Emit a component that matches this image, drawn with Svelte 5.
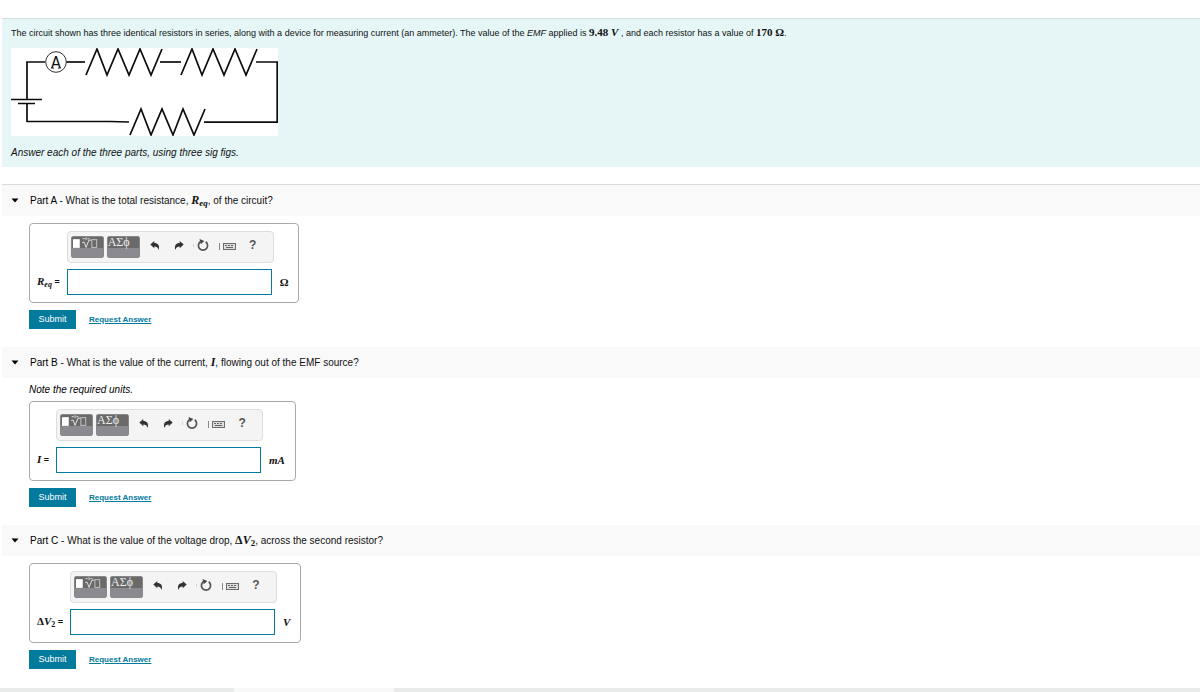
<script lang="ts">
	type Part = {
		id: string;
		before: string;
		symbol: string;
		sub?: string;
		subItalic?: boolean;
		upright?: string;
		after: string;
		note?: string;
		unit: string;
		unitUpright?: boolean;
	};

	const parts: Part[] = [
		{
			id: 'A',
			before: 'What is the total resistance,',
			symbol: 'R',
			sub: 'eq',
			subItalic: true,
			after: ', of the circuit?',
			unit: 'Ω',
			unitUpright: true
		},
		{
			id: 'B',
			before: 'What is the value of the current,',
			symbol: 'I',
			after: ', flowing out of the EMF source?',
			note: 'Note the required units.',
			unit: 'mA'
		},
		{
			id: 'C',
			before: 'What is the value of the voltage drop,',
			upright: 'Δ',
			symbol: 'V',
			sub: '2',
			after: ', across the second resistor?',
			unit: 'V'
		}
	];

	let answers: Record<string, string> = $state({ A: '', B: '', C: '' });
	let open: Record<string, boolean> = $state({ A: true, B: true, C: true });
</script>

{#snippet symbol(part: Part)}
	<span class="math">{part.upright ?? ''}<i>{part.symbol}</i>{#if part.sub}<sub class:italic={part.subItalic}>{part.sub}</sub>{/if}</span>
{/snippet}

<div class="page">
	<section class="intro">
		<p>
			The circuit shown has three identical resistors in series, along with a device for measuring
			current (an ammeter). The value of the <em>EMF</em> applied is
			<span class="math">9.48 <i>V</i></span> , and each resistor has a value of
			<span class="math">170 Ω</span>.
		</p>
		<svg class="circuit" viewBox="0 0 267 88" role="img" aria-label="Series circuit">
			<rect width="267" height="88" fill="#fff" />
			<g fill="none" stroke="#0c0c0c" stroke-width="1.7">
				<path d="M34 14H16V51M0 51.5H31M7 55.5H24M16 56V73.5H99L118 74" />
				<path d="M55 14H74" />
				<path d="M75 27L86 1L96 27L107 1L118 27L129 1L140 27L151 1" />
				<path d="M149 14H170" />
				<path d="M170 27L181 1L191 27L202 1L213 27L224 1L235 27L246 1" />
				<path d="M245 14H266.2V74.2H193" />
				<path d="M119 87L130 61L140 87L151 61L162 87L172 61L183 87L194 61" />
			</g>
			<circle cx="45" cy="14" r="10.3" fill="#fff" stroke="#333" />
			<text x="45" y="20" text-anchor="middle">A</text>
			<path d="M40 20H43M47 20H50" stroke="#222" />
		</svg>
		<p class="hint">Answer each of the three parts, using three sig figs.</p>
	</section>

	<main>
		{#each parts as part (part.id)}
			<section>
				<h2>
					<button
						class="toggle"
						aria-label="Toggle part {part.id}"
						aria-expanded={open[part.id]}
						onclick={() => (open[part.id] = !open[part.id])}
					>
						<svg viewBox="0 0 8 5" width="8" height="5"><path d="M0.5 0.5H7.5L4 4.5Z" /></svg>
					</button>
					<span>
						<span class="name">Part {part.id}</span> - {part.before}
						{@render symbol(part)}{part.after}
					</span>
				</h2>

				{#if open[part.id]}
					<form class="body" onsubmit={(e) => e.preventDefault()}>
						{#if part.note}
							<p class="note">{part.note}</p>
						{/if}
						<div class="answer">
							<div class="toolbar" role="toolbar" aria-label="Math tools">
								<button type="button" class="key" aria-label="Templates">
									<svg viewBox="0 0 32 14" width="32" height="14">
										<rect x="1" y="2" width="7" height="9" fill="#fff" />
										<path d="M10.5 5.5L12.5 5L14.5 10.5L17.5 3H20M11 1.5H13M14.5 0V3M16 1.5H18" fill="none" stroke="#e4e4e4" />
										<rect x="20.5" y="2.5" width="5" height="8" fill="none" stroke="#c4c4c4" />
									</svg>
								</button>
								<button type="button" class="key" aria-label="Symbols"><span>ΑΣϕ</span></button>
								<button type="button" class="tool" aria-label="Undo">
									<svg viewBox="0 0 10 9" width="10" height="9">
										<path d="M0.3 3.6L4.3 0V2C7.8 2 10 4.4 8.6 9C7.8 6.4 6.6 5.5 4.3 5.5V7.3Z" fill="#333" />
									</svg>
								</button>
								<button type="button" class="tool" aria-label="Redo">
									<svg viewBox="0 0 10 9" width="10" height="9">
										<path d="M9.7 3.6L5.7 0V2C2.2 2 0 4.4 1.4 9C2.2 6.4 3.4 5.5 5.7 5.5V7.3Z" fill="#333" />
									</svg>
								</button>
								<button type="button" class="tool" aria-label="Reset">
									<svg viewBox="0 0 22 12" width="22" height="12">
										<path d="M1.5 5V8" stroke="#d4d4d4" />
										<path d="M8.3 2.8A4.6 4.6 0 1 0 13.7 2.8" fill="none" stroke="#555" stroke-width="1.7" />
										<path d="M7.5 0L12.3 2L8.8 5.3Z" fill="#444" />
									</svg>
								</button>
								<button type="button" class="tool keyboard" aria-label="Keyboard shortcuts">
									<svg viewBox="0 0 18 9" width="18" height="9">
										<path d="M1.5 1V8" stroke="#888" />
										<rect x="5.5" y="1.5" width="12" height="6" fill="#ddd" stroke="#6c6c6c" />
										<path d="M7 3.5H16" stroke="#666" stroke-dasharray="2 1" />
										<path d="M8 5.5H15" stroke="#666" />
									</svg>
								</button>
								<button type="button" class="tool help" aria-label="Help">?</button>
							</div>
							<label for="answer-{part.id}">{@render symbol(part)} =</label>
							<input id="answer-{part.id}" type="text" autocomplete="off" bind:value={answers[part.id]} />
							<span class="math unit" class:upright={part.unitUpright}>{part.unit}</span>
						</div>
						<div class="actions">
							<button type="submit" class="submit">Submit</button>
							<a href="#request-{part.id}">Request Answer</a>
						</div>
					</form>
				{/if}
			</section>
		{/each}
	</main>

	<footer><span></span></footer>
</div>

<style>
	:global(body) {
		background: #fff;
	}

	.page {
		padding-top: 18px;
		color: #111;
		font-family: 'Liberation Sans', Arial, sans-serif;
		font-size: 9px;
		line-height: 16px;
	}

	p,
	h2 {
		margin: 0;
		font-size: inherit;
		font-weight: normal;
	}

	button {
		padding: 0;
		border: 0;
		background: none;
		font: inherit;
		cursor: pointer;
	}

	.intro {
		margin-left: 2px;
		padding: 6px 9px;
		border-top: 1px solid #d5dfe0;
		background: #e6f6f7;
	}

	.circuit {
		display: block;
		width: 267px;
		height: 88px;
		margin: 7px 0 9px;
	}

	.circuit text {
		font-family: 'Liberation Sans Narrow', 'DejaVu Sans Condensed', sans-serif;
		font-size: 16px;
		fill: #111;
	}

	.hint,
	.note {
		font-size: 10px;
		font-style: italic;
	}

	.math {
		font-family: 'Liberation Serif', 'Times New Roman', serif;
		font-size: 11px;
		font-weight: bold;
		line-height: 1;
	}

	.math sub {
		font-size: 8px;
		line-height: 1;
		vertical-align: -2px;
	}

	.italic {
		font-style: italic;
	}

	main {
		margin: 17px 0 0 2px;
		border-top: 1px solid #dcdcdc;
	}

	h2 {
		display: flex;
		align-items: center;
		height: 31px;
		background: #f9f9f9;
		font-size: 10px;
	}

	h2 .math {
		font-size: 12px;
	}

	h2 .math sub {
		font-size: 9px;
	}

	.name {
		color: #000;
	}

	.toggle {
		display: flex;
		justify-content: center;
		width: 12px;
		margin: 0 9px 0 7px;
	}

	.body {
		padding: 7px 27px 18px;
	}

	.note {
		margin-bottom: 6px;
		line-height: 10px;
		color: #000;
	}

	.answer {
		display: inline-grid;
		grid-template-columns: auto 207px auto;
		align-items: center;
		row-gap: 6px;
		padding: 7px 10px 7px 7px;
		border: 1px solid #aaa;
		border-radius: 4px;
		vertical-align: top;
	}

	.toolbar {
		grid-column: 2;
		display: flex;
		align-items: center;
		box-sizing: border-box;
		height: 32px;
		padding-left: 3px;
		border: 1px solid #ddd;
		border-radius: 4px;
		background: #f4f4f4;
	}

	.key {
		display: flex;
		width: 33px;
		height: 22px;
		margin-right: 3px;
		border: 1px solid #888;
		border-radius: 2px;
		background: linear-gradient(#6a6a6a 55%, #8b8a90 55%);
		color: #eee;
	}

	.key span {
		font-family: 'Liberation Serif', serif;
		font-size: 12px;
		line-height: 10px;
	}

	.tool {
		display: flex;
		align-items: center;
		justify-content: center;
		width: 24px;
		height: 24px;
		padding-bottom: 4px;
	}

	.keyboard {
		padding-bottom: 2px;
	}

	.help {
		padding-left: 4px;
		color: #555;
		font-size: 12px;
		font-weight: bold;
	}

	label {
		grid-column: 1;
		padding-right: 7px;
		font-weight: bold;
	}

	input {
		box-sizing: border-box;
		width: 205px;
		height: 26px;
		padding: 0 4px;
		border: 1px solid #047a9c;
		border-radius: 0;
		background: #fff;
		font: inherit;
	}

	.unit {
		padding-left: 6px;
		font-style: italic;
	}

	.upright {
		font-style: normal;
	}

	.actions {
		display: flex;
		align-items: center;
		gap: 13px;
		margin-top: 7px;
	}

	.submit {
		width: 47px;
		height: 19px;
		background: #047a9c;
		color: #fff;
		line-height: 19px;
	}

	a {
		color: #047a9c;
		font-size: 8px;
		font-weight: bold;
	}

	footer {
		height: 4px;
		margin-top: 1px;
		background: #e9ebeb;
	}

	footer span {
		display: block;
		width: 160px;
		height: 4px;
		margin-left: 234px;
		background: #f8f8f8;
	}
</style>
